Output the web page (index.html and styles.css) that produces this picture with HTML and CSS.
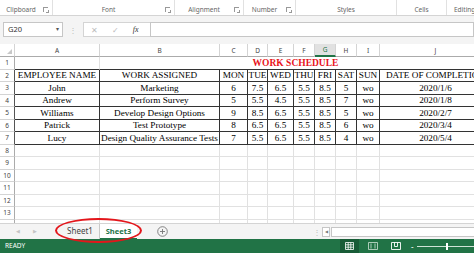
FILE: index.html
```html
<!DOCTYPE html>
<html lang="en">
<head>
  <meta charset="UTF-8" />
  <title>Work Schedule - Excel</title>
  <link rel="stylesheet" href="styles.css">
</head>
<body>

  <div class="ribbon">
    <div class="group g-clip"><span>Clipboard</span><i class="launch"></i></div>
    <div class="group g-font"><span>Font</span><i class="launch"></i></div>
    <div class="group g-align"><span>Alignment</span><i class="launch"></i></div>
    <div class="group g-num"><span>Number</span><i class="launch"></i></div>
    <div class="group g-styles"><span>Styles</span></div>
    <div class="group g-cells"><span>Cells</span></div>
    <div class="group g-edit"><span>Editing</span></div>
  </div>

  <div class="fbar">
    <div class="namebox">G20<span class="drop">&#9662;</span></div>
    <div class="grip">&#8942;</div>
    <div class="fx-box">
      <span class="fx-btn">&#10005;</span>
      <span class="fx-btn">&#10003;</span>
      <span class="fx-btn fx">fx</span>
    </div>
    <div class="formula"></div>
  </div>

  <div class="sheet">
    <table>
      <colgroup>
        <col style="width:15px"><col style="width:85px"><col style="width:120px"><col style="width:28px">
        <col style="width:20px"><col style="width:26px"><col style="width:21px"><col style="width:21px">
        <col style="width:21px"><col style="width:23px"><col style="width:112px">
      </colgroup>
      <tr class="colhead">
        <th class="corner"></th>
        <th>A</th><th>B</th><th>C</th><th>D</th><th>E</th><th>F</th><th class="sel">G</th><th>H</th><th>I</th><th>J</th>
      </tr>
      <tr>
        <td class="rh">1</td>
        <td class="top"></td>
        <td class="top title" colspan="9">WORK SCHEDULE</td>
      </tr>
      <tr class="data">
        <td class="rh">2</td>
        <td>EMPLOYEE NAME</td><td>WORK ASSIGNED</td><td>MON</td><td>TUE</td><td>WED</td><td>THU</td><td>FRI</td><td>SAT</td><td>SUN</td><td>DATE OF COMPLETION</td>
      </tr>
      <tr class="data">
        <td class="rh">3</td>
        <td>John</td><td>Marketing</td><td>6</td><td>7.5</td><td>6.5</td><td>5.5</td><td>8.5</td><td>5</td><td>wo</td><td>2020/1/6</td>
      </tr>
      <tr class="data">
        <td class="rh">4</td>
        <td>Andrew</td><td>Perform Survey</td><td>5</td><td>5.5</td><td>4.5</td><td>5.5</td><td>8.5</td><td>7</td><td>wo</td><td>2020/1/8</td>
      </tr>
      <tr class="data">
        <td class="rh">5</td>
        <td>Williams</td><td>Develop Design Options</td><td>9</td><td>8.5</td><td>6.5</td><td>5.5</td><td>8.5</td><td>5</td><td>wo</td><td>2020/2/7</td>
      </tr>
      <tr class="data">
        <td class="rh">6</td>
        <td>Patrick</td><td>Test Prototype</td><td>8</td><td>6.5</td><td>6.5</td><td>5.5</td><td>8.5</td><td>6</td><td>wo</td><td>2020/3/4</td>
      </tr>
      <tr class="data">
        <td class="rh">7</td>
        <td>Lucy</td><td>Design Quality Assurance Tests</td><td>7</td><td>5.5</td><td>6.5</td><td>5.5</td><td>8.5</td><td>4</td><td>wo</td><td>2020/5/4</td>
      </tr>
      <tr><td class="rh">8</td><td></td><td></td><td></td><td></td><td></td><td></td><td></td><td></td><td></td><td></td></tr>
      <tr><td class="rh">9</td><td></td><td></td><td></td><td></td><td></td><td></td><td></td><td></td><td></td><td></td></tr>
      <tr><td class="rh">10</td><td></td><td></td><td></td><td></td><td></td><td></td><td></td><td></td><td></td><td></td></tr>
      <tr><td class="rh">11</td><td></td><td></td><td></td><td></td><td></td><td></td><td></td><td></td><td></td><td></td></tr>
      <tr><td class="rh">12</td><td></td><td></td><td></td><td></td><td></td><td></td><td></td><td></td><td></td><td></td></tr>
      <tr><td class="rh">13</td><td></td><td></td><td></td><td></td><td></td><td></td><td></td><td></td><td></td><td></td></tr>
      <tr><td class="rh">14</td><td></td><td></td><td></td><td></td><td></td><td></td><td></td><td></td><td></td><td></td></tr>
    </table>
  </div>

  <div class="tabs">
    <span class="nav">&#9664;</span>
    <span class="nav">&#9654;</span>
    <div class="tab">Sheet1</div>
    <div class="tab active">Sheet3</div>
    <svg class="add" width="11" height="11" viewBox="0 0 11 11">
      <circle cx="5.5" cy="5.5" r="4.8" fill="none" stroke="#777" stroke-width="0.9"/>
      <path d="M5.5 3v5M3 5.5h5" stroke="#777" stroke-width="0.9"/>
    </svg>
    <div class="split">&#8942;</div>
    <div class="hscroll">
      <span class="arrow">&#9664;</span>
      <span class="thumb"></span>
    </div>
  </div>

  <div class="status">
    <span class="ready">READY</span>
    <div class="views">
      <span class="view on">
        <svg width="9" height="8" viewBox="0 0 9 8"><path d="M0.5 0.5h8v7h-8zM0.5 2.8h8M0.5 5.2h8M3.2 0.5v7M5.8 0.5v7" fill="none" stroke="#fff" stroke-width="0.8"/></svg>
      </span>
      <span class="view">
        <svg width="10" height="8" viewBox="0 0 10 8"><path d="M0.5 0.5h9v7h-9zM3 1.5v5M7 1.5v5" fill="none" stroke="#cfe3d6" stroke-width="0.8"/></svg>
      </span>
      <span class="view">
        <svg width="10" height="8" viewBox="0 0 10 8"><path d="M0.5 0.5h9v7h-9zM3.5 0.5v4h3v-4" fill="none" stroke="#fff" stroke-width="0.9"/></svg>
      </span>
    </div>
    <div class="zoom">
      <span class="minus">-</span>
      <span class="track"><span class="knob"></span></span>
    </div>
  </div>

  <div class="callout"></div>

</body>
</html>
```

FILE: styles.css
```css
html, body {
  margin: 0;
  padding: 0;
  height: 100%;
}

body {
  width: 474px;
  height: 253px;
  overflow: hidden;
  display: flex;
  flex-direction: column;
  position: relative;
  background-color: #ffffff;
  font-family: "Noto Sans", "Open Sans", sans-serif;
  color: #444;
}

/* ribbon group labels */
.ribbon {
  flex: none;
  height: 16px;
  display: flex;
  background-color: #ffffff;
  border-bottom: 1px solid #d4d4d4;
  box-sizing: border-box;
}

.group {
  flex: none;
  display: flex;
  align-items: flex-end;
  justify-content: center;
  position: relative;
  box-sizing: border-box;
  padding-bottom: 1px;
  border-right: 1px solid #e1e1e1;
  font-size: 6.5px;
  line-height: 8px;
  color: #666;
}

.g-clip, .g-font, .g-align, .g-num {
  padding-right: 10px;
}

.g-clip { width: 53px; }
.g-font { width: 122px; }
.g-align { width: 69px; }
.g-num { width: 52px; }
.g-styles { width: 101px; }
.g-cells { width: 50px; }
.g-edit { flex: 1; justify-content: flex-start; padding-left: 7px; border-right: none; }

.launch {
  position: absolute;
  right: 4px;
  bottom: 3px;
  width: 4px;
  height: 4px;
  border-left: 1px solid #999;
  border-top: 1px solid #999;
}

.launch::after {
  content: "";
  position: absolute;
  right: -1px;
  bottom: -1px;
  width: 2px;
  height: 2px;
  border-right: 1px solid #999;
  border-bottom: 1px solid #999;
}

/* formula bar */
.fbar {
  flex: none;
  height: 28px;
  display: flex;
  align-items: flex-start;
  padding: 6px 0 0 3px;
  box-sizing: border-box;
  background-color: #f4f4f4;
}

.namebox {
  width: 60px;
  height: 15px;
  box-sizing: border-box;
  border: 1px solid #c6c6c6;
  background-color: #ffffff;
  font-size: 7.5px;
  line-height: 13px;
  padding-left: 4px;
  color: #333;
  display: flex;
  justify-content: space-between;
}

.drop {
  font-size: 6px;
  color: #555;
  padding-right: 3px;
}

.grip {
  width: 20px;
  text-align: center;
  font-size: 8px;
  line-height: 15px;
  color: #bbb;
}

.fx-box {
  width: 67px;
  height: 15px;
  box-sizing: border-box;
  border: 1px solid #d4d4d4;
  border-right: none;
  background-color: #ffffff;
  display: flex;
  padding-right: 4px;
}

.fx-btn {
  width: 21px;
  text-align: center;
  font-size: 8px;
  line-height: 13px;
  color: #bbb;
}

.fx {
  font-family: "Liberation Serif", serif;
  font-style: italic;
  color: #333;
}

.formula {
  flex: 1;
  height: 15px;
  box-sizing: border-box;
  border: 1px solid #c6c6c6;
  background-color: #ffffff;
}

/* grid */
.sheet {
  flex: none;
  height: 179px;
  overflow: hidden;
  background-color: #ffffff;
}

table {
  table-layout: fixed;
  border-collapse: separate;
  border-spacing: 0;
  width: 492px;
}

th, td {
  box-sizing: border-box;
  height: 12.5px;
  padding: 0;
  border-right: 1px solid #e1e1e1;
  border-bottom: 1px solid #e1e1e1;
  white-space: nowrap;
  overflow: hidden;
}

.colhead th {
  height: 12px;
  font-weight: normal;
  font-size: 6.5px;
  line-height: 11px;
  color: #444;
  background-color: #ffffff;
  border-right: 1px solid #d4d4d4;
  border-bottom: 1px solid #ababab;
}

.colhead th.sel {
  background-color: #e1e1e1;
  color: #217346;
  border-bottom: 2px solid #217346;
}

.corner {
  position: relative;
}

.corner::after {
  content: "";
  position: absolute;
  right: 2px;
  bottom: 2px;
  border-left: 5px solid transparent;
  border-bottom: 5px solid #c8c8c8;
}

td.rh {
  font-family: "Noto Sans", "Open Sans", sans-serif;
  font-size: 6.5px;
  line-height: 11px;
  text-align: center;
  vertical-align: middle;
  color: #444;
  border-right: 1px solid #ababab;
  border-bottom: 1px solid #d4d4d4;
}

td {
  font-family: "Liberation Serif", serif;
  font-size: 9.2px;
  line-height: 11px;
  color: #000;
  text-align: center;
  vertical-align: bottom;
}

td.top {
  border-bottom: 1px solid #333;
}

td.title {
  color: #e8141b;
  font-weight: bold;
  font-size: 9.5px;
}

.data td {
  border-right: 1px solid #333;
  border-bottom: 1px solid #333;
}

.data td.rh {
  border-right: 1px solid #555;
  border-bottom: 1px solid #d4d4d4;
}

/* sheet tabs */
.tabs {
  flex: none;
  height: 16px;
  display: flex;
  align-items: stretch;
  box-sizing: border-box;
  border-top: 1px solid #d4d4d4;
  background-color: #f4f4f4;
}

.nav {
  width: 17px;
  text-align: center;
  font-size: 5px;
  line-height: 15px;
  color: #c4c4c4;
}

.nav:first-child {
  margin-left: 9px;
}

.tab {
  font-size: 8px;
  line-height: 14px;
  color: #444;
  text-align: center;
  box-sizing: border-box;
}

.tab:first-of-type {
  margin-left: 14px;
  width: 43px;
  padding-left: 4px;
  border-right: 1px solid #c8c8c8;
}

.tab.active {
  width: 37px;
  background-color: #ffffff;
  color: #217346;
  font-weight: bold;
  font-size: 7.5px;
  border-bottom: 1px solid #217346;
}

.add {
  margin: 2px 0 0 20px;
}

.split {
  margin-left: 145px;
  width: 9px;
  font-size: 8px;
  line-height: 15px;
  color: #bbb;
}

.hscroll {
  flex: 1;
  display: flex;
  margin: 3px 0 2px;
}

.arrow {
  width: 8px;
  box-sizing: border-box;
  border: 1px solid #c6c6c6;
  background-color: #ffffff;
  font-size: 4px;
  line-height: 8px;
  text-align: center;
  color: #777;
}

.thumb {
  flex: 1;
  margin-left: 1px;
  border: 1px solid #c6c6c6;
  border-right: none;
  background-color: #ffffff;
}

/* status bar */
.status {
  flex: none;
  height: 14px;
  display: flex;
  align-items: stretch;
  background-color: #217346;
  color: #ffffff;
}

.ready {
  padding-left: 5px;
  font-size: 6.5px;
  line-height: 14px;
}

.views {
  margin-left: auto;
  display: flex;
  margin-right: 6px;
}

.view {
  width: 19px;
  display: flex;
  align-items: center;
  justify-content: center;
  margin-left: 4px;
}

.view.on {
  background-color: #185c37;
}

.zoom {
  display: flex;
  align-items: center;
  width: 63px;
}

.minus {
  font-size: 8px;
  width: 6px;
}

.track {
  flex: 1;
  height: 1px;
  background-color: #cfe3d6;
  position: relative;
}

.knob {
  position: absolute;
  left: 29px;
  top: -3px;
  width: 2px;
  height: 7px;
  background-color: #ffffff;
}

/* red annotation ring around the sheet tabs */
.callout {
  position: absolute;
  left: 55px;
  top: 218px;
  width: 87px;
  height: 25px;
  box-sizing: border-box;
  border: 2px solid #e3161b;
  border-radius: 50%;
}
```
